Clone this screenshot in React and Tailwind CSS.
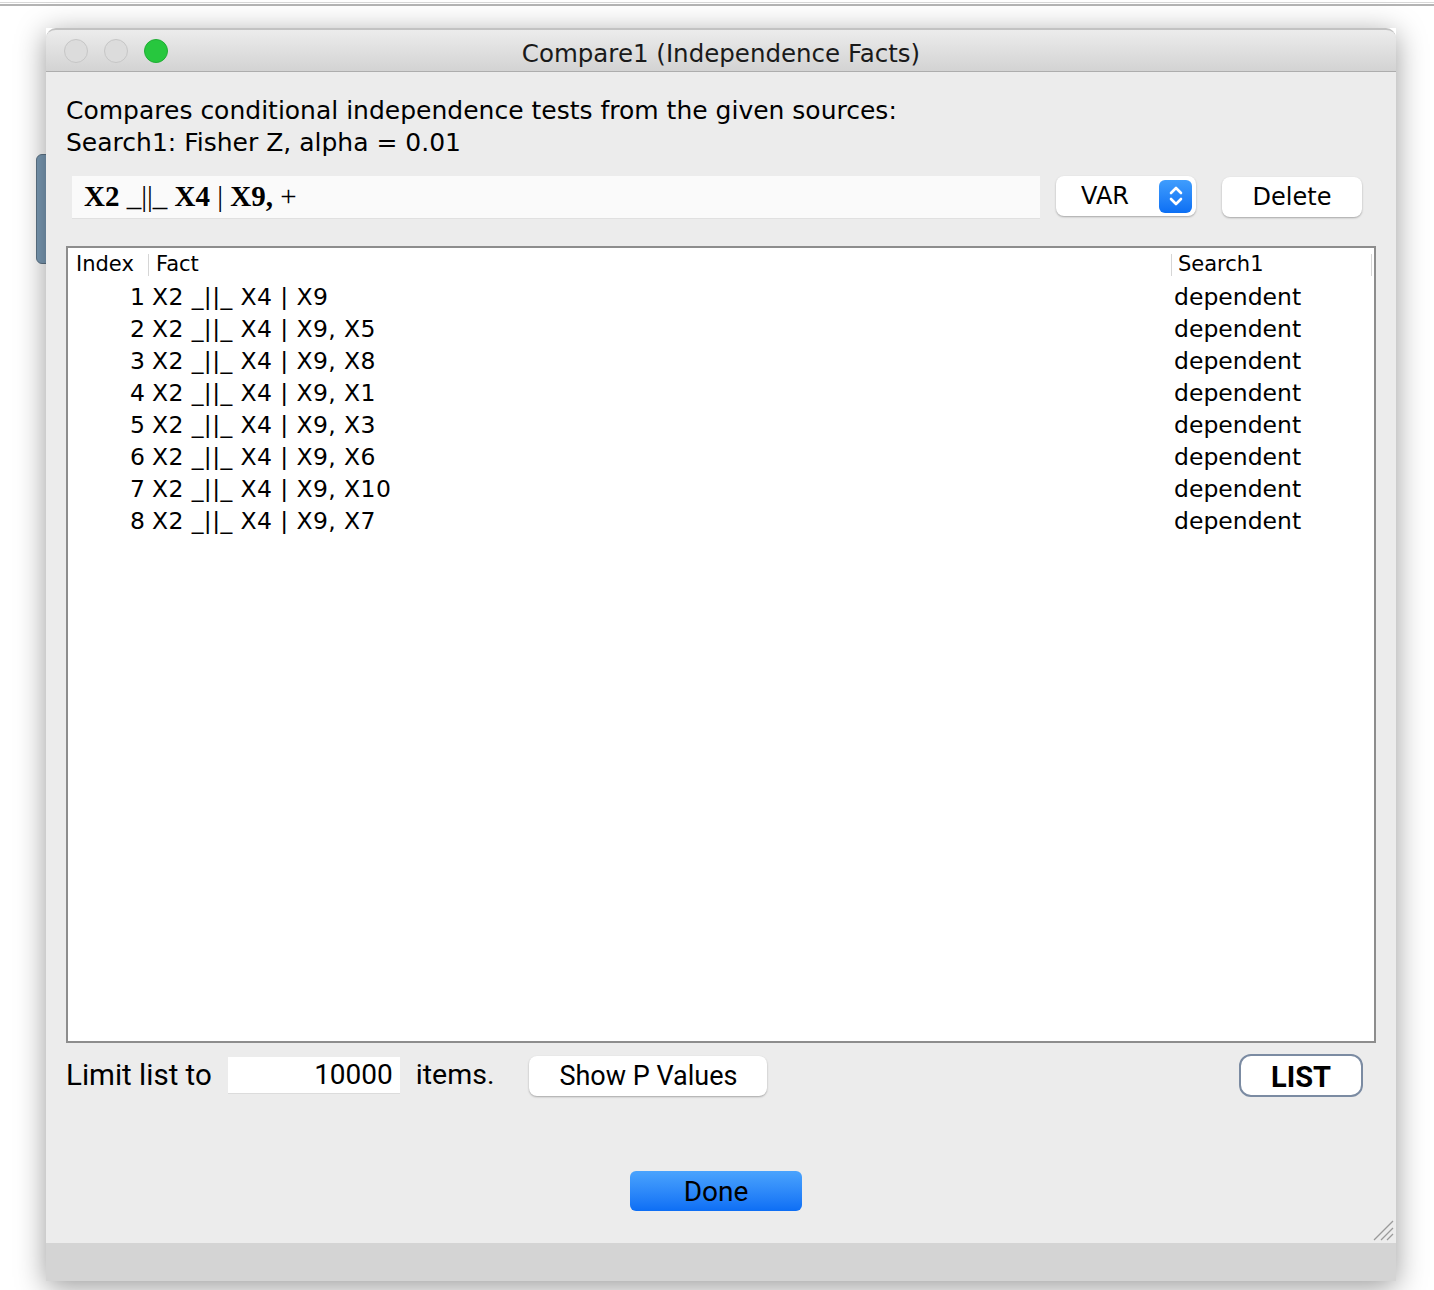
import React from 'react';

const facts = ['X9', 'X9, X5', 'X9, X8', 'X9, X1', 'X9, X3', 'X9, X6', 'X9, X10', 'X9, X7'];

const lucida = { fontFamily: '"DejaVu Sans", "Noto Sans", sans-serif' };

const App = () => {
  return (
    <div className="relative min-h-[1290px] bg-white text-black" style={lucida}>
      {/* top edge of the screen */}
      <div className="mt-[2px] h-[4px] border-t border-b-2 border-t-[#d8d8d8] border-b-[#b4b4b4]" />

      {/* window behind, peeking out on the left */}
      <div className="absolute left-[36px] top-[152px] h-[110px] w-[12px] rounded-l-[6px] border border-[#5d7487] bg-[#7c9cb7]" />

      {/* dialog window */}
      <div className="relative ml-[46px] mt-[22px] w-[1350px] shadow-[0_6px_28px_rgba(0,0,0,0.4)]">
        {/* title bar */}
        <div className="relative flex h-[44px] items-center rounded-t-[10px] border-t-2 border-b border-t-[#c2c2c2] border-b-[#adadad] bg-gradient-to-b from-[#ececec] to-[#d3d3d3]">
          <div className="flex items-center gap-[16px] pl-[18px]">
            <span className="h-[24px] w-[24px] rounded-full border border-[#c6c6c6] bg-[#dcdcdc]" />
            <span className="h-[24px] w-[24px] rounded-full border border-[#c6c6c6] bg-[#dcdcdc]" />
            <span className="h-[24px] w-[24px] rounded-full border border-[#1fae34] bg-[#27c73e]" />
          </div>
          <div className="absolute inset-0 flex items-center justify-center pt-[7px] text-[24.5px] text-[#1a1a1a]">
            Compare1 (Independence Facts)
          </div>
        </div>

        {/* body */}
        <div className="relative flex h-[1171px] flex-col bg-[#ececec] px-[20px] pt-[23px]">
          <div className="text-[25px] leading-[32px]">
            <div>Compares conditional independence tests from the given sources:</div>
            <div>Search1: Fisher Z, alpha = 0.01</div>
          </div>

          {/* fact entry row */}
          <div className="mt-[17px] flex items-start pl-[6px] pr-[14px]">
            <div
              className="flex h-[43px] w-[968px] items-center border-b border-[#e0e0e0] bg-[#fafafa] pl-[12px] text-[29px]"
              style={{ fontFamily: '"Liberation Serif", "Times New Roman", serif' }}
            >
              <span className="font-bold">X2</span>
              <span className="whitespace-pre"> _||_ </span>
              <span className="font-bold">X4</span>
              <span className="whitespace-pre"> | </span>
              <span className="font-bold">X9,</span>
              <span className="whitespace-pre"> +</span>
            </div>
            <div className="ml-[16px] flex h-[40px] w-[140px] items-center rounded-[8px] bg-white pl-[25px] pr-[4px] text-[24px] shadow-[0_1px_2px_rgba(0,0,0,0.3)]">
              <span className="flex-1">VAR</span>
              <span className="flex h-[33px] w-[33px] items-center justify-center rounded-[6px] bg-gradient-to-b from-[#3f9dfd] to-[#0b6ff4]">
                <svg width="16" height="24" viewBox="0 0 16 24" fill="none" stroke="white" strokeWidth="2.6" strokeLinecap="round" strokeLinejoin="round">
                  <path d="M3 9 L8 4 L13 9" />
                  <path d="M3 15 L8 20 L13 15" />
                </svg>
              </span>
            </div>
            <button className="ml-[26px] mt-[1px] h-[40px] w-[140px] rounded-[8px] bg-white text-[24px] shadow-[0_1px_2px_rgba(0,0,0,0.3)]">
              Delete
            </button>
          </div>

          {/* facts table */}
          <div className="mt-[27px] h-[797px] border-2 border-[#8d8d8d] bg-white">
            <div className="flex h-[34px] items-center text-[21px]">
              <div className="w-[80px] pl-[8px]">Index</div>
              <span className="h-[22px] w-px bg-[#d6d6d6]" />
              <div className="w-[1022px] pl-[7px]">Fact</div>
              <span className="h-[22px] w-px bg-[#d6d6d6]" />
              <div className="w-[199px] pl-[6px]">Search1</div>
              <span className="h-[22px] w-px bg-[#d6d6d6]" />
            </div>
            {facts.map((f, i) => (
              <div key={i} className="flex h-[32px] items-center text-[23.5px]">
                <div className="w-[80px] pr-[3px] text-right">{i + 1}</div>
                <div className="w-[1023px] pl-[4px] tracking-[0.4px]">X2 _||_ X4 | {f}</div>
                <div className="flex-1 pl-[3px]">dependent</div>
              </div>
            ))}
          </div>

          {/* bottom controls */}
          <div
            className="mt-[11px] flex h-[43px] items-center pr-[13px]"
            style={{ fontFamily: 'Roboto, "Noto Sans", sans-serif' }}
          >
            <span className="text-[29.5px]">Limit list to</span>
            <div className="ml-[16px] flex h-[37px] w-[172px] items-center justify-end border-b border-[#dcdcdc] bg-white pr-[7px] text-[28px]">
              10000
            </div>
            <span className="ml-[16px] text-[28.5px]">items.</span>
            <button className="ml-[35px] h-[40px] w-[238px] rounded-[8px] bg-white text-[27px] shadow-[0_1px_2px_rgba(0,0,0,0.3)]">
              Show P Values
            </button>
            <button className="ml-auto h-[43px] w-[124px] rounded-[12px] border-2 border-[#7b8ba2] bg-white text-[29px] font-bold">
              LIST
            </button>
          </div>

          <div className="mt-[74px] flex justify-center pr-[10px]">
            <button
              className="h-[40px] w-[172px] rounded-[6px] bg-gradient-to-b from-[#4aa3fd] to-[#0c6ef5] text-[28px] text-black"
              style={{ fontFamily: 'Roboto, "Noto Sans", sans-serif' }}
            >
              Done
            </button>
          </div>

          {/* resize grip */}
          <svg className="absolute bottom-[2px] right-[2px]" width="22" height="22" viewBox="0 0 22 22" stroke="#9a9a9a" strokeWidth="1.2">
            <path d="M2 21 L21 2" />
            <path d="M9 21 L21 9" />
            <path d="M15 21 L21 15" />
          </svg>
        </div>

        {/* bottom band */}
        <div className="h-[38px] bg-[#d4d4d4]" />
      </div>
    </div>
  );
};

export default App;
